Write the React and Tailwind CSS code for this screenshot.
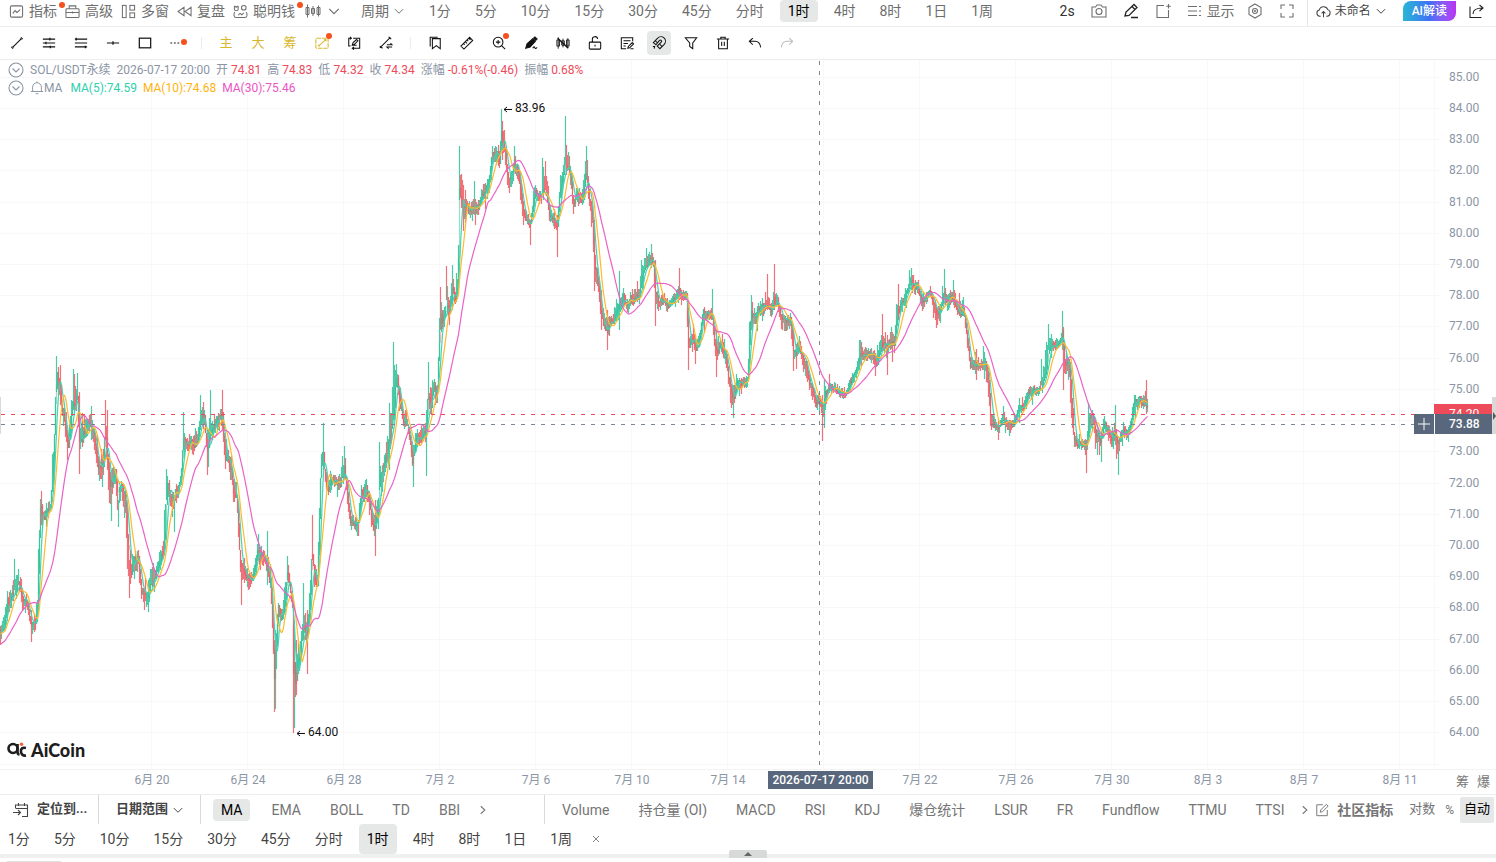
import React, { useMemo, useState } from 'react';
import clsx from 'clsx';

const PERIODS = ['1分', '5分', '10分', '15分', '30分', '45分', '分时', '1时', '4时', '8时', '1日', '1周'];
const MAIN_INDICATORS = ['MA', 'EMA', 'BOLL', 'TD', 'BBI'];
const SUB_INDICATORS = ['Volume', '持仓量 (OI)', 'MACD', 'RSI', 'KDJ', '爆仓统计', 'LSUR', 'FR', 'Fundflow', 'TTMU', 'TTSI'];
const DATES = ['6月 20', '6月 24', '6月 28', '7月 2', '7月 6', '7月 10', '7月 14', '', '7月 22', '7月 26', '7月 30', '8月 3', '8月 7', '8月 11'];

const UP = '#4cc9a6';
const DOWN = '#ee727a';
const GRID = '#f8f8f9';

// one hour is one pixel wide; each knot is [x, high, low]
const RANGE = [
  [-30, 640, 660], [-12, 636, 652], [0, 622, 640], [4, 615, 630], [7, 592, 616], [10, 596, 610], [13, 577, 600], [18, 575, 588],
  [20, 578, 595], [23, 597, 607], [26, 595, 610], [29, 610, 620], [31, 618, 636], [35, 618, 632], [37, 598, 622], [38, 535, 600],
  [40, 500, 530], [45, 507, 522], [50, 500, 515], [52, 460, 505], [54, 420, 470], [55, 390, 430], [57, 370, 395], [60, 374, 400],
  [62, 395, 420], [64, 405, 430], [66, 420, 445], [68, 430, 452], [70, 410, 440], [73, 382, 415], [77, 384, 410], [79, 425, 455],
  [82, 422, 448], [86, 415, 436], [90, 415, 432], [92, 420, 438], [96, 440, 468], [100, 460, 486], [103, 445, 478], [105, 415, 445],
  [108, 440, 498], [110, 470, 508], [115, 465, 485], [117, 490, 515], [121, 480, 495], [125, 490, 518], [127, 505, 585], [130, 560, 596],
  [133, 550, 575], [138, 550, 570], [141, 580, 600], [145, 588, 605], [148, 588, 608], [150, 565, 590], [155, 565, 582], [160, 553, 570],
  [163, 540, 560], [165, 500, 540], [167, 478, 500], [170, 488, 505], [174, 486, 510], [178, 482, 497], [181, 465, 485], [183, 430, 460],
  [186, 440, 452], [190, 437, 450], [193, 435, 455], [197, 430, 445], [201, 405, 422], [204, 410, 425], [207, 440, 468], [209, 415, 450],
  [213, 420, 440], [217, 413, 430], [222, 400, 425], [224, 430, 460], [228, 448, 468], [231, 455, 480], [233, 480, 503], [236, 482, 500],
  [238, 500, 540], [240, 550, 580], [243, 565, 585], [247, 568, 588], [250, 573, 588], [254, 565, 580], [257, 543, 560], [260, 550, 570],
  [263, 550, 566], [267, 552, 573], [270, 562, 592], [272, 590, 635], [274, 640, 695], [276, 625, 665], [278, 598, 622], [282, 605, 625],
  [285, 583, 610], [287, 563, 585], [290, 576, 598], [292, 592, 612], [293, 625, 680], [295, 650, 700], [297, 645, 682], [300, 640, 665],
  [303, 605, 640], [306, 618, 645], [308, 600, 640], [310, 572, 602], [312, 535, 562], [314, 560, 582], [317, 568, 592], [319, 485, 560],
  [321, 448, 480], [323, 438, 462], [325, 470, 488], [328, 478, 498], [332, 473, 487], [337, 475, 490], [340, 475, 490], [344, 455, 475],
  [347, 482, 508], [350, 510, 533], [354, 518, 530], [358, 520, 538], [361, 485, 510], [365, 480, 497], [369, 490, 508], [372, 508, 530],
  [375, 510, 538], [378, 495, 525], [380, 465, 490], [382, 465, 500], [384, 455, 475], [388, 430, 465], [391, 405, 448], [394, 355, 415],
  [396, 360, 385], [400, 392, 412], [403, 412, 428], [407, 415, 430], [410, 430, 445], [412, 448, 475], [415, 432, 460], [420, 427, 445],
  [424, 427, 440], [426, 420, 448], [428, 378, 415], [431, 388, 415], [434, 378, 395], [437, 385, 408], [439, 315, 358], [441, 300, 328],
  [444, 308, 332], [446, 285, 318], [449, 298, 322], [452, 275, 300], [455, 285, 305], [457, 278, 298], [458, 240, 280], [459, 165, 200],
  [461, 170, 208], [463, 190, 225], [466, 200, 215], [470, 205, 217], [474, 197, 218], [478, 200, 215], [482, 185, 205], [487, 178, 196],
  [490, 165, 185], [492, 145, 168], [495, 147, 165], [499, 150, 168], [501, 125, 150], [503, 132, 152], [505, 145, 165], [508, 175, 190],
  [512, 170, 185], [514, 156, 172], [518, 166, 180], [521, 182, 210], [523, 205, 222], [527, 213, 224], [530, 218, 232], [532, 202, 220],
  [535, 182, 200], [538, 190, 204], [541, 190, 204], [543, 168, 195], [546, 170, 195], [549, 200, 218], [553, 213, 228], [557, 215, 240],
  [560, 175, 210], [563, 165, 188], [565, 150, 168], [567, 152, 170], [570, 165, 185], [573, 195, 213], [577, 187, 202], [580, 190, 205],
  [583, 183, 208], [585, 160, 185], [587, 160, 190], [589, 188, 208], [592, 210, 225], [594, 245, 280], [597, 270, 288], [600, 285, 318],
  [603, 310, 328], [607, 318, 338], [610, 314, 330], [614, 312, 325], [617, 302, 320], [619, 295, 322], [623, 288, 302], [627, 300, 315],
  [630, 292, 313], [634, 290, 305], [639, 289, 300], [641, 260, 288], [645, 258, 270], [650, 250, 266], [653, 256, 270], [655, 285, 310],
  [659, 297, 310], [664, 293, 305], [668, 300, 310], [674, 293, 303], [679, 283, 297], [681, 290, 305], [686, 289, 299], [688, 330, 355],
  [692, 332, 346], [696, 335, 353], [700, 326, 340], [703, 308, 325], [708, 308, 320], [712, 308, 320], [714, 332, 350], [717, 345, 367],
  [720, 336, 350], [724, 345, 360], [727, 355, 375], [730, 380, 402], [733, 388, 408], [737, 377, 393], [741, 378, 390], [747, 376, 388],
  [749, 322, 365], [751, 305, 332], [755, 310, 325], [759, 302, 318], [763, 302, 315], [767, 292, 310], [771, 302, 318], [774, 290, 310],
  [777, 293, 313], [780, 307, 323], [785, 315, 333], [790, 313, 330], [793, 345, 363], [796, 345, 360], [799, 337, 352], [803, 355, 368],
  [807, 362, 383], [812, 385, 400], [816, 392, 410], [820, 394, 408], [822, 400, 422], [825, 388, 410], [828, 383, 394], [834, 383, 393],
  [840, 387, 398], [845, 391, 400], [850, 376, 390], [856, 366, 377], [859, 348, 368], [864, 347, 360], [868, 347, 360], [872, 350, 364],
  [877, 350, 368], [882, 328, 350], [886, 338, 358], [890, 335, 350], [894, 332, 353], [896, 302, 330], [900, 300, 314], [905, 290, 306],
  [908, 280, 295], [911, 273, 286], [914, 280, 294], [918, 281, 294], [922, 295, 310], [927, 292, 301], [930, 284, 298], [933, 298, 313],
  [936, 308, 323], [940, 305, 316], [944, 282, 300], [947, 295, 313], [950, 290, 305], [953, 287, 303], [957, 300, 318], [961, 302, 317],
  [964, 305, 320], [967, 330, 350], [970, 355, 371], [973, 358, 370], [978, 360, 373], [982, 360, 370], [985, 357, 370], [988, 370, 400],
  [990, 405, 430], [994, 419, 430], [998, 424, 435], [1003, 413, 424], [1008, 421, 431], [1014, 419, 428], [1018, 403, 415], [1023, 402, 412],
  [1028, 388, 400], [1034, 385, 395], [1038, 385, 396], [1043, 372, 386], [1046, 340, 375], [1050, 338, 350], [1055, 340, 351], [1060, 335, 348],
  [1062, 322, 345], [1064, 350, 378], [1069, 358, 375], [1071, 385, 430], [1074, 432, 452], [1078, 438, 448], [1084, 440, 450], [1086, 440, 458],
  [1089, 408, 438], [1093, 412, 430], [1096, 430, 445], [1100, 430, 450], [1104, 413, 430], [1108, 425, 440], [1112, 433, 450], [1115, 417, 445],
  [1117, 440, 460], [1120, 430, 448], [1123, 422, 440], [1128, 428, 440], [1131, 415, 430], [1134, 396, 415], [1138, 395, 407], [1143, 395, 408],
  [1147, 400, 412],
];

// long wicks: [x, high, low, rising]
const WICKS = [
  [14, 559, 590, 1], [31, 610, 642, 0], [41, 491, 525, 0], [56, 356, 392, 1], [60, 365, 405, 0], [67, 430, 460, 0], [73, 369, 410, 1],
  [77, 373, 400, 1], [79, 392, 474, 0], [91, 406, 440, 1], [105, 400, 440, 0], [107, 410, 470, 0], [111, 470, 521, 1], [118, 500, 527, 1],
  [129, 560, 598, 0], [144, 590, 610, 0], [148, 580, 612, 1], [166, 469, 500, 1], [174, 495, 532, 1], [183, 412, 450, 1], [200, 395, 430, 1],
  [207, 430, 475, 0], [210, 390, 440, 1], [222, 390, 430, 0], [241, 560, 605, 0], [258, 534, 560, 1], [267, 531, 585, 1], [274, 640, 712, 0],
  [275, 630, 709, 1], [287, 556, 580, 1], [293, 600, 733, 0], [294, 620, 728, 1], [296, 640, 695, 0], [303, 583, 640, 1], [307, 610, 674, 0],
  [312, 515, 560, 0], [323, 423, 470, 1], [344, 446, 480, 1], [375, 500, 556, 0], [379, 442, 490, 1], [389, 403, 470, 1], [393, 342, 420, 1],
  [413, 445, 487, 1], [426, 410, 476, 1], [428, 362, 400, 1], [440, 287, 330, 0], [446, 266, 300, 0], [452, 265, 310, 1], [459, 146, 200, 1],
  [463, 185, 231, 0], [474, 181, 215, 1], [501, 109, 150, 1], [502, 121, 160, 0], [514, 146, 170, 1], [530, 220, 245, 0], [542, 158, 195, 1],
  [545, 161, 190, 0], [557, 215, 257, 0], [565, 116, 165, 1], [566, 145, 175, 0], [586, 146, 180, 1], [594, 220, 291, 0], [601, 290, 330, 0],
  [607, 310, 350, 0], [619, 271, 330, 1], [651, 244, 268, 1], [655, 260, 326, 0], [679, 268, 300, 0], [688, 300, 370, 0], [695, 335, 364, 0],
  [712, 289, 320, 1], [716, 330, 377, 0], [733, 385, 418, 1], [751, 295, 330, 1], [767, 274, 310, 0], [774, 264, 310, 0], [793, 330, 371, 0],
  [822, 395, 441, 0], [824, 380, 428, 1], [859, 340, 370, 1], [882, 314, 350, 0], [887, 335, 375, 0], [898, 284, 320, 0], [911, 268, 290, 1],
  [936, 305, 328, 0], [944, 269, 300, 1], [953, 280, 305, 1], [983, 346, 370, 1], [998, 420, 440, 0], [1009, 420, 436, 1], [1041, 359, 385, 1],
  [1048, 324, 350, 1], [1062, 311, 350, 1], [1063, 327, 390, 0], [1086, 440, 473, 0], [1088, 403, 440, 1], [1101, 430, 462, 1],
  [1115, 405, 445, 1], [1118, 440, 475, 1], [1146, 380, 414, 0],
];

function buildSeries() {
  let seed = 20260717;
  const rand = () => {
    seed = (seed * 1664525 + 1013904223) % 4294967296;
    return seed / 4294967296;
  };
  const wickAt = new Map(WICKS.map((w) => [w[0], w]));
  const closes = [];
  const out = { upWick: '', downWick: '', upBody: '', downBody: '' };
  let k = 0;
  let drift = 0;
  let prev = 650;
  for (let x = -30; x <= 1147; x += 1) {
    while (k < RANGE.length - 2 && RANGE[k + 1][0] < x) k += 1;
    const [x0, h0, l0] = RANGE[k];
    const [x1, h1, l1] = RANGE[k + 1];
    const t = (x - x0) / (x1 - x0);
    const hi = h0 + (h1 - h0) * t;
    const lo = l0 + (l1 - l0) * t;
    drift = drift * 0.6 + (rand() - 0.5) * 0.9;
    const close = (hi + lo) / 2 + drift * (lo - hi) * 0.6;
    const rising = close < prev;
    const bodyTop = Math.min(close, prev);
    const bodyEnd = Math.max(close, prev, bodyTop + 1);
    // every few bars one reaches well past its neighbours
    const reachUp = rand() < 0.16 ? 4 + rand() * 7 : 1;
    const reachDown = rand() < 0.16 ? 4 + rand() * 7 : 1;
    let top = Math.min(bodyTop, hi - reachUp + rand() * (lo - hi) * 0.4);
    let end = Math.max(bodyEnd, lo + reachDown - rand() * (lo - hi) * 0.4);
    let up = rising;
    const wick = wickAt.get(x);
    if (wick) {
      top = wick[1];
      end = wick[2];
      up = Boolean(wick[3]);
    }
    if (x >= 0) {
      const wickPath = `M${x + 0.5} ${Math.round(top)}V${Math.round(end)}`;
      const bodyPath = `M${x + 0.5} ${Math.round(bodyTop)}V${Math.round(bodyEnd)}`;
      if (up) {
        out.upWick += wickPath;
        out.upBody += bodyPath;
      } else {
        out.downWick += wickPath;
        out.downBody += bodyPath;
      }
    }
    closes.push(close);
    prev = close;
  }
  const average = (n) => {
    let d = '';
    for (let i = 30; i < closes.length; i += 1) {
      let sum = 0;
      for (let j = 0; j < n; j += 1) sum += closes[i - j];
      d += `${d ? 'L' : 'M'}${i - 29.5} ${(sum / n).toFixed(1)}`;
    }
    return d;
  };
  return { ...out, ma5: average(5), ma10: average(10), ma30: average(30) };
}

function Icon({ children, size = 16, width = 1.1, className }) {
  return (
    <svg
      width={size}
      height={size}
      viewBox="0 0 16 16"
      fill="none"
      stroke="currentColor"
      strokeWidth={width}
      className={clsx('shrink-0', className)}
      aria-hidden
    >
      {children}
    </svg>
  );
}

const Chevron = ({ size = 12 }) => (
  <Icon size={size} width={1.3}><path d="M2.5 5.500l5.500 5.500 5.500-5.500" /></Icon>
);

const ChevronRight = () => (
  <Icon size={12} width={1.4}><path d="M5 3l5.500 5-5.500 5" /></Icon>
);

const CandlesIcon = ({ struck, size = 16 }) => (
  <Icon size={size} width={1}>
    <path d="M2.5 1.5v13M13.5 2.5v11M8 3v10M1 4.5h3v7H1zM6.5 5.5h3v5h-3zM12 4.5h3v7h-3z" />
    {struck && <path d="M2 2.5l12 11.5" strokeWidth="1.5" />}
  </Icon>
);

const MENU = [
  {
    label: '指标', dot: true,
    icon: <><rect x="1.5" y="2" width="13" height="12" rx="1.5" /><path d="M4 10l2.5-3 2 2L12 6" /></>,
  },
  {
    label: '高级',
    icon: <><rect x="1" y="5" width="14" height="9.5" rx="1" /><path d="M4.5 5V2h7v3M1 9h14M8 8v2" /></>,
  },
  {
    label: '多窗',
    icon: <><rect x="1.5" y="1.5" width="4" height="13" /><rect x="9.5" y="1.5" width="5" height="5" /><rect x="9.5" y="9.5" width="5" height="5" /></>,
  },
  {
    label: '复盘',
    icon: <path d="M7.5 3.5v9L1 8zM15 3.5v9L8.5 8z" />,
  },
  {
    label: '聪明钱', dot: true,
    icon: <><path d="M1.5 2l2 1.500 2-1.500M1.500 2v3.500c0 2 4 2 4 0V2M2 8.500c-1.500 2-1.500 6 1.500 6h9c3 0 3-4 1.500-6M5.500 12l2-2 2 1.500 2-2" /><circle cx="11.500" cy="4" r="2.500" /></>,
  },
];

const DRAW_TOOLS = [
  { name: '线段', icon: <><path d="M3.5 12.5l9-9" /><path d="M1.5 12.5l2 2M12.5 1.5l2 2M3 11.5l1.5 1.5M11.5 3L13 4.5" /></> },
  { name: '平行线', icon: <path d="M1 3.5h14M1 8h14M1 12.5h14M9 2v3M4.500 6.500v3M9.500 11v3" strokeWidth="1.4" /> },
  { name: '通道', icon: <path d="M1 3.5h14M1 8h14M1 12.5h14M2.500 2v3M13 11v3" strokeWidth="1.4" /> },
  { name: '水平线', icon: <path d="M1 8h14M8 6v4" strokeWidth="1.4" /> },
  { name: '矩形', icon: <rect x="1.5" y="2.5" width="13" height="11" strokeWidth="1.4" /> },
  { name: '更多工具', dot: 'mid', icon: <path d="M0.5 8h2M4.5 8h2M8.5 8h2" strokeWidth="1.4" /> },
];

const MARK_TOOLS = [
  { name: '主力', text: '主' },
  { name: '大单', text: '大' },
  { name: '筹码', text: '筹' },
  { name: '画线预警', dot: 'top', gold: true, icon: <><rect x="1" y="2.5" width="14" height="11.5" rx="1" strokeDasharray="5 1" /><path d="M4 11.5l8-7M3.5 10l2 2M10.5 4h2v2" /></> },
  { name: '同步画线', icon: <><path d="M5 2.500H2v9h2M3.500 1L5 2.500 3.500 4M14.500 5v9H6M8 12.500L6 14l2 1.500M7 2.500h7.500v3" /><path d="M6 10.500l1-3L11 4l1.500 1.500-4 4zM6 10.500h5" /></> },
  { name: '切换画线', icon: <><path d="M1 13.500L13 1.500M1 11.500l3 2.500M11 1l3 2.500" /><path d="M9 10h6l-2-2M15 12.500H9l2 2" /></> },
];

const VIEW_TOOLS = [
  { name: '收藏', icon: <><path d="M5 3h9v11.5L9.5 11 5 14.5z" /><path d="M2.5 12V1.5H11" /></> },
  { name: '测量', icon: <path d="M1 11.5L11 1.5 14.5 5l-10 10zM4 8.5l1.5 1.5M6 6.5l2 2M8 4.5L9.5 6M10 2.5l2 2" /> },
  { name: '放大', dot: 'top', icon: <><circle cx="7" cy="7" r="5.5" /><path d="M11 11l4 4M7 4.5v5M4.5 7h5" /></> },
  { name: '画笔', icon: <><path d="M2 14l1.5-5L10 3l3 3-6 6.5z" fill="currentColor" /><path d="M11 2.5L12.5 1 15 3.5 13.5 5z" fill="currentColor" /><path d="M10 14c1-2 2-2 2.500-.5S14 14 15 13" /></> },
  { name: '隐藏K线', candles: true },
  { name: '解锁', icon: <><rect x="1.5" y="7" width="13" height="8" rx="1" /><path d="M5 7V4a3 3 0 0 1 6-.5M8 10v2" /></> },
  { name: '备注', icon: <><path d="M14.5 6V2h-13v12.5H7M4 5.5h8M4 8.5h5M4 11.5h2.5" /><path d="M9 14l.5-2L14 7.5 15.5 9 11 13.5zM12 14.5h3.5" /></> },
  { name: '磁吸', active: true, icon: <><path d="M1.500 7.500L6.500 2.500a5 5 0 0 1 7.500 7L9 14.500 6 11.500l4.500-4.500a1.300 1.300 0 0 0-2-2L4.500 10zM4 5.500L6.500 8M11.500 12L9 9.500" /><path d="M1 12h2l-.500 2.500" /></> },
  { name: '筛选', icon: <path d="M1.5 2h13L10 8v6.5L6.5 12V8z" /> },
  { name: '删除', icon: <path d="M1 3.5h14M5.5 3.5v-2h5v2M3 3.5v11h10v-11M6.5 6.5v5M9.5 6.5v5" /> },
  { name: '撤销', icon: <path d="M5.5 2.5L1.5 6l4 4M1.5 6H8c4 0 6 2.5 6.5 7" /> },
  { name: '重做', muted: true, icon: <path d="M10.5 2.5l4 3.5-4 4M14.5 6H8c-4 0-6 2.5-6.5 7" /> },
];

function ToolButton({ tool }) {
  return (
    <button
      type="button"
      aria-label={tool.name}
      className={clsx(
        'relative flex h-6 w-8 items-center justify-center text-[13px]',
        tool.text || tool.gold ? 'text-[#d9b72c]' : tool.muted ? 'text-[#bcbcbc]' : 'text-[#111]',
      )}
    >
      <span className={clsx('flex h-6 w-6 items-center justify-center rounded-sm', tool.active && 'bg-[#e6e7e7]')}>
        {tool.text}
        {tool.candles && <CandlesIcon struck size={14} />}
        {tool.icon && <Icon size={14} width={1.2}>{tool.icon}</Icon>}
      </span>
      {tool.dot && (
        <span
          className={clsx(
            'absolute right-1.5 h-1.5 w-1.5 rounded-full bg-[#f4511e]',
            tool.dot === 'mid' ? 'top-2' : 'top-0.5',
          )}
        />
      )}
    </button>
  );
}

const ToolDivider = () => (
  <span className="flex h-3 w-[17px] justify-center"><span className="w-px bg-[#ececec]" /></span>
);

function PeriodTabs({ value, onChange, tall }) {
  return (
    <div className={clsx('flex items-center gap-2', tall ? 'text-[#444]' : 'text-[#6e6e6e]')}>
      {PERIODS.map((p) => (
        <button
          key={p}
          type="button"
          aria-pressed={p === value}
          onClick={() => onChange(p)}
          className={clsx(
            'rounded-sm px-2 whitespace-nowrap',
            tall ? 'h-[30px]' : 'h-[22px]',
            p === value && 'bg-[#e6e7e7] text-black',
          )}
        >
          {p}
        </button>
      ))}
    </div>
  );
}

function TopBar({ period, onPeriod }) {
  return (
    <header className="flex h-[27px] shrink-0 items-start border-b border-[#ededed] pl-[9px] text-[#6e6e6e]">
      <div className="flex h-[22px] items-center gap-2">
        {MENU.map((m) => (
          <button key={m.label} type="button" className="relative flex items-center gap-[5px] whitespace-nowrap">
            <Icon size={15}>{m.icon}</Icon>
            {m.label}
            {m.dot && <span className="absolute -right-2 top-px h-1.5 w-1.5 rounded-full bg-[#f4511e]" />}
          </button>
        ))}
        <button type="button" aria-label="K线类型" className="ml-0.5 flex items-center gap-1.5">
          <CandlesIcon />
          <Chevron size={14} />
        </button>
        <button type="button" className="ml-3 flex items-center gap-1 whitespace-nowrap" aria-haspopup="menu">
          周期
          <Chevron />
        </button>
      </div>
      <div className="ml-4">
        <PeriodTabs value={period} onChange={onPeriod} />
      </div>
      <div className="ml-auto flex h-[22px] items-center gap-4 whitespace-nowrap pr-3">
        <button type="button" className="text-[#333]">2s</button>
        <button type="button" aria-label="截图">
          <Icon><path d="M1 4h3.5L6 2h4l1.500 2H15v10H1z" /><circle cx="8" cy="8.5" r="3" /></Icon>
        </button>
        <button type="button" aria-label="编辑" className="text-[#222]">
          <Icon width={1.3}><path d="M2 13l1-4 8-7.500L14 4.500 6 12.500zM9 3.500l3 3M8 14.500h7" /></Icon>
        </button>
        <button type="button" aria-label="新窗口">
          <Icon><path d="M9 2.5H2v12h11.5V7M13.5 1v4.500M11.300 3.200h4.500" /></Icon>
        </button>
        <button type="button" className="flex items-center gap-1">
          <Icon><path d="M1 3.5h9M1 8h9M1 12.5h9M12 3.5h2M12 8h2M12 12.5h2" /></Icon>
          显示
        </button>
        <button type="button" aria-label="设置" className="-ml-1">
          <Icon><path d="M8 1l6 3.5v7L8 15l-6-3.5v-7z" /><circle cx="8" cy="8" r="2.5" /><circle cx="8" cy="8" r=".5" /></Icon>
        </button>
        <button type="button" aria-label="全屏">
          <Icon><path d="M2 6V2h4M10 2h4v4M14 10v4h-4M6 14H2v-4" /></Icon>
        </button>
        <div className="-ml-1 flex h-[26px] items-center self-start border-l border-[#e6e6e6] pb-1 pl-2 text-xs text-[#444]">
          <button type="button" className="flex items-center gap-1">
            <Icon size={15}><path d="M5 13H4a3.300 3.300 0 0 1-.5-6.500A4.700 4.700 0 0 1 12.500 6 3.600 3.600 0 0 1 12 13h-1M8 14V8M6 10l2-2 2 2" /></Icon>
            未命名
            <Chevron />
          </button>
        </div>
        <button
          type="button"
          className="h-5 rounded-tl-lg rounded-br-lg bg-gradient-to-r from-[#29b6d3] via-[#3f6ff5] to-[#b832f5] px-[9px] text-xs font-medium text-white"
        >
          AI解读
        </button>
        <button type="button" aria-label="分享" className="-ml-1 text-[#222]">
          <Icon><path d="M2 3.500v11h11.500M5 11c0-4 3-6 9.500-6M11.500 2l3.500 3-3.500 3" /></Icon>
        </button>
      </div>
    </header>
  );
}

function Legend() {
  const quote = [['开', '74.81'], ['高', '74.83'], ['低', '74.32'], ['收', '74.34'], ['涨幅', '-0.61%(-0.46)'], ['振幅', '0.68%']];
  const toggle = (
    <Icon><circle cx="8" cy="8" r="7" /><path d="M4.500 6.500L8 10l3.500-3.500" /></Icon>
  );
  return (
    <div className="absolute left-2 top-px text-xs leading-[18px] text-[#8b95a5]">
      <div className="flex items-center gap-1.5 whitespace-nowrap">
        <button type="button" aria-label="收起行情">{toggle}</button>
        <span>SOL/USDT永续</span>
        <span>2026-07-17 20:00</span>
        {quote.map(([k, v]) => (
          <span key={k} className="flex gap-[3px]">
            {k}
            <span className="text-[#ee4b5a]">{v}</span>
          </span>
        ))}
      </div>
      <div className="flex items-center gap-1.5 whitespace-nowrap">
        <button type="button" aria-label="收起均线">{toggle}</button>
        <span className="mr-0.5 flex items-center">
          <Icon size={14}><path d="M1 12h14M3 12V7a5 5 0 0 1 10 0v5M8 2V.5M6.500 14.500h3" /></Icon>
          MA
        </span>
        <span className="text-[#2fcfae]">MA(5):74.59</span>
        <span className="text-[#ffb310]">MA(10):74.68</span>
        <span className="text-[#ea55c4]">MA(30):75.46</span>
      </div>
    </div>
  );
}

function Logo() {
  return (
    <div className="absolute bottom-[34px] left-[7px] flex items-center gap-1 font-['Lato'] text-lg leading-5 font-black text-[#1d1d1d]">
      <svg width="20" height="16" viewBox="0 0 20 16" fill="none" stroke="#1d1d1d" strokeWidth="2.6" aria-hidden>
        <circle cx="6" cy="6.5" r="4.5" />
        <path d="M10.500 2v7.500c0 2 .5 3 2 3" />
        <path d="M19 6c-4-1-5.500 1-5 4 .4 2.500 2 4 5 3.500" />
        <circle cx="14.500" cy="2.200" r="1.800" fill="#f4613c" stroke="none" />
      </svg>
      AiCoin
    </div>
  );
}

function PriceChart() {
  const s = useMemo(buildSeries, []);
  const prices = Array.from({ length: 22 }, (_, i) => 85 - i);
  const priceY = (p) => Math.floor(77.2 + (85 - p) * 31.22) + 0.5;
  return (
    <section className="relative min-h-0 flex-1 overflow-hidden">
      <svg className="block h-full w-full" role="img" aria-label="SOL/USDT永续 K线图">
        <g transform="translate(0 -60)">
          <g stroke={GRID}>
            {prices.map((p) => <path key={p} d={`M0 ${priceY(p)}H1440`} />)}
            {DATES.map((_, i) => <path key={i} d={`M${151.5 + i * 96} 60V769`} />)}
            <path d="M0 764.5H1440M1434.5 60V769" />
            <path d="M0 769.5H1496" stroke="#f3f3f4" />
          </g>
          <g strokeWidth="1.2">
            <path d={s.upWick} stroke={UP} />
            <path d={s.downWick} stroke={DOWN} />
            <path d={s.upBody} stroke="#2dbd8f" strokeOpacity=".5" />
            <path d={s.downBody} stroke="#ee4f5c" strokeOpacity=".4" />
          </g>
          <g fill="none" strokeWidth="1.2" strokeLinejoin="round">
            <path d={s.ma5} stroke="#45d3b2" />
            <path d={s.ma10} stroke="#ffb92e" />
            <path d={s.ma30} stroke="#ea62c8" />
          </g>
          <path d="M1 414.5H1434" stroke="#ee4b5a" strokeDasharray="4 6" />
          <path d="M1 424.5H1414M819.5 61V769" stroke="#7b8595" strokeDasharray="4 6" />
          <g fill="none" stroke="#111">
            <path d="M504 109.5h8M507 107l-3 2.500 3 2.500" />
            <path d="M297 733.5h8M300 731l-3 2.500 3 2.500" />
          </g>
          <g fontSize="12" fill="#111">
            <text x="515" y="112">83.96</text>
            <text x="308" y="736">64.00</text>
          </g>
          <g fontSize="12" fill="#8b95a5">
            {prices.filter((p) => p !== 74).map((p) => (
              <text key={p} x="1449" y={priceY(p) + 3.5}>{p.toFixed(2)}</text>
            ))}
            <g textAnchor="middle">
              {DATES.map((d, i) => <text key={i} x={152 + i * 96} y="784">{d}</text>)}
            </g>
          </g>
        </g>
      </svg>
      <Legend />
      <div className="absolute left-0 top-[337px] h-[37px] w-px bg-[#d9d9d9]" />
      <div className="absolute right-1 top-[344px] h-2.5 w-[58px] overflow-hidden bg-[#ee4b5a] pl-[15px] text-xs leading-5 text-white">74.20</div>
      <div className="absolute right-1 top-[354px] flex h-5 gap-px text-xs leading-5 font-medium text-white">
        <button type="button" aria-label="添加预警" className="flex w-5 items-center justify-center bg-[#59677c]">
          <Icon size={14}><path d="M8 1v14M1 8h14" /></Icon>
        </button>
        <span className="w-[57px] bg-[#59677c] pl-3.5">73.88</span>
      </div>
      <button type="button" aria-label="展开侧栏" className="absolute right-0 top-[337px] flex h-[37px] w-1 items-center bg-[#d9d9d9]">
        <svg width="4" height="8" viewBox="0 0 4 8" fill="#555" aria-hidden><path d="M1 0l3 4-3 4z" /></svg>
      </button>
      <div className="absolute bottom-[5px] left-[768px] h-[18px] w-[105px] bg-[#59677c] text-center text-xs leading-[18px] font-medium text-white">
        2026-07-17 20:00
      </div>
      <Logo />
      <div className="absolute bottom-0.5 right-1.5 flex gap-2 text-[13px] leading-5 text-[#777]">
        <button type="button">筹</button>
        <button type="button">爆</button>
      </div>
    </section>
  );
}

function IndicatorTabs({ items, active, onSelect }) {
  return items.map((name) => (
    <button
      key={name}
      type="button"
      aria-pressed={active === name}
      onClick={() => onSelect(name)}
      className={clsx('h-[22px] rounded-sm px-2 whitespace-nowrap', active === name && 'bg-[#e6e7e7] text-black')}
    >
      {name}
    </button>
  ));
}

function IndicatorBar() {
  const [main, setMain] = useState('MA');
  const [sub, setSub] = useState(null);
  return (
    <div className="flex h-[30px] shrink-0 items-center border-t border-[#ededed] text-[#757575]">
      <button type="button" className="flex h-full w-[98px] items-center gap-2 pl-[13px] text-[13px] font-bold text-[#444]">
        <Icon><path d="M2.500 6V3h12v11.500H9M2.500 6.500h12M5.500 1v3M11.500 1v3M0 10.500h7M5 8l2.500 2.500L5 13" /></Icon>
        定位到...
      </button>
      <button type="button" className="flex h-full w-[103px] items-center gap-1 border-x border-[#d9d9d9] pl-[17px] text-[13px] font-bold text-[#444]">
        日期范围
        <Chevron />
      </button>
      <div className="flex h-full w-[344px] items-center gap-[13px] border-r border-[#d9d9d9] pl-3">
        <IndicatorTabs items={MAIN_INDICATORS} active={main} onSelect={setMain} />
        <button type="button" aria-label="更多主图指标" className="-ml-1"><ChevronRight /></button>
      </div>
      <div className="flex h-full min-w-0 items-center gap-[13px] pl-[9px]">
        <IndicatorTabs items={SUB_INDICATORS} active={sub} onSelect={setSub} />
      </div>
      <div className="ml-auto flex items-center pr-0.5 whitespace-nowrap">
        <button type="button" aria-label="更多副图指标"><ChevronRight /></button>
        <button type="button" className="ml-1 flex items-center gap-2 font-bold">
          <Icon size={14}><path d="M9 2H2v12.5h12V8M6 10.5l.5-2.5L13 1.500 15 3.500 8.500 10z" /></Icon>
          社区指标
        </button>
        <button type="button" className="ml-4 text-[13px]">对数</button>
        <button type="button" className="ml-2.5 text-xs">%</button>
        <button type="button" className="ml-1.5 h-[26px] rounded-xs bg-[#e6e7e7] px-1 text-[13px] text-black">自动</button>
      </div>
    </div>
  );
}

export default function App() {
  const [period, setPeriod] = useState('1时');

  return (
    <div className="flex h-screen flex-col overflow-hidden bg-white font-['Roboto','Noto_Sans_CJK_SC',sans-serif] text-sm">
      <TopBar period={period} onPeriod={setPeriod} />
      <div className="flex h-[33px] shrink-0 items-center border-b border-[#ededed] pl-px">
        {DRAW_TOOLS.map((t) => <ToolButton key={t.name} tool={t} />)}
        <ToolDivider />
        {MARK_TOOLS.map((t) => <ToolButton key={t.name} tool={t} />)}
        <ToolDivider />
        {VIEW_TOOLS.map((t) => <ToolButton key={t.name} tool={t} />)}
      </div>
      <PriceChart />
      <IndicatorBar />
      <div className="flex h-[30px] shrink-0 items-center gap-5">
        <PeriodTabs value={period} onChange={setPeriod} tall />
        <button type="button" aria-label="关闭" className="-ml-2 text-[#666]">
          <Icon size={8} width={1.6}><path d="M2 2l12 12M14 2L2 14" /></Icon>
        </button>
      </div>
      <div className="relative h-1 shrink-0 bg-[#f0f0f0]">
        <button
          type="button"
          aria-label="展开面板"
          className="absolute bottom-0 left-1/2 flex h-2 w-[38px] -translate-x-1/2 items-center justify-center rounded-t-xs bg-[#d8d9d9]"
        >
          <svg width="8" height="4" viewBox="0 0 8 4" fill="#666" aria-hidden><path d="M4 0l4 4H0z" /></svg>
        </button>
      </div>
      <div className="flex h-1 shrink-0 items-end pl-[7px]"><span className="h-px w-[54px] bg-[#e2e2e2]" /></div>
    </div>
  );
}
